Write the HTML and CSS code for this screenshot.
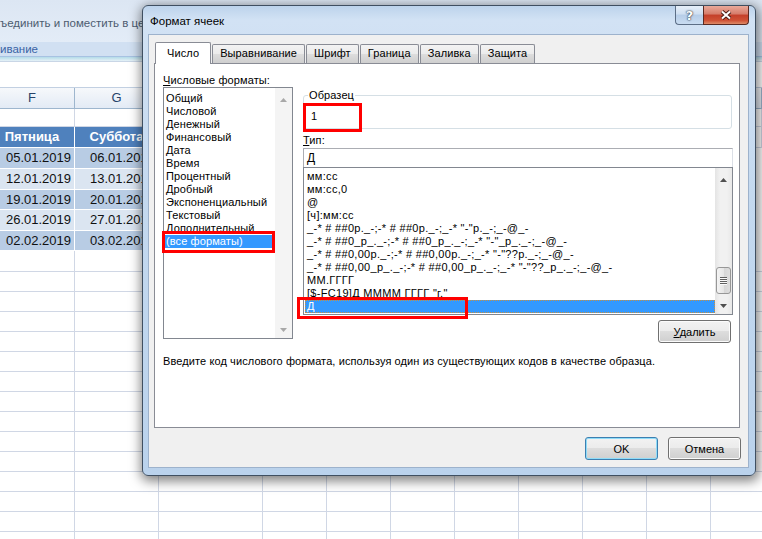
FILE: index.html
```html
<!DOCTYPE html>
<html lang="ru">
<head>
    <meta charset="UTF-8">
    <meta name="viewport" content="width=device-width, initial-scale=1.0">
    <title>Формат ячеек</title>
    <link rel="stylesheet" href="styles.css">
</head>
<body>
    <div class="excel">
        <div class="ribbon">ъединить и поместить в це</div>
        <div class="ribbon-group">ивание</div>
        <div class="ribbon-edge"></div>
        <div class="formula-bar"></div>
        <div class="sheet">
            <div class="row col-head">
                <div class="cell">F</div>
                <div class="cell">G</div>
                <div class="cell fill"></div>
            </div>
            <div class="row r-empty">
                <div class="cell"></div>
                <div class="cell"></div>
                <div class="cell fill"></div>
            </div>
            <div class="row r-head">
                <div class="cell">Пятница</div>
                <div class="cell">Суббота</div>
                <div class="cell fill"></div>
            </div>
            <div class="row r-data dark">
                <div class="cell">05.01.2019</div>
                <div class="cell">06.01.2019</div>
                <div class="cell fill"></div>
            </div>
            <div class="row r-data">
                <div class="cell">12.01.2019</div>
                <div class="cell">13.01.2019</div>
                <div class="cell fill"></div>
            </div>
            <div class="row r-data dark short">
                <div class="cell">19.01.2019</div>
                <div class="cell">20.01.2019</div>
                <div class="cell fill"></div>
            </div>
            <div class="row r-data">
                <div class="cell">26.01.2019</div>
                <div class="cell">27.01.2019</div>
                <div class="cell fill"></div>
            </div>
            <div class="row r-data dark short">
                <div class="cell">02.02.2019</div>
                <div class="cell">03.02.2019</div>
                <div class="cell fill"></div>
            </div>
            <div class="sheet-rest"></div>
        </div>
    </div>

    <div class="dialog">
        <div class="titlebar">
            <div class="title">Формат ячеек</div>
            <div class="caption">
                <div class="cap-btn cap-help">?</div>
                <div class="cap-btn cap-close">
                    <svg width="14" height="10" viewBox="0 0 14 10">
                        <path d="M3 1.5 L11 8.5 M11 1.5 L3 8.5" stroke="#4b1d15" stroke-width="4"/>
                        <path d="M3 1.5 L11 8.5 M11 1.5 L3 8.5" stroke="#fff" stroke-width="2"/>
                    </svg>
                </div>
            </div>
        </div>

        <div class="client">
            <div class="tabs">
                <div class="tab active">Число</div>
                <div class="tab">Выравнивание</div>
                <div class="tab">Шрифт</div>
                <div class="tab">Граница</div>
                <div class="tab">Заливка</div>
                <div class="tab">Защита</div>
            </div>

            <div class="panel">
                <div class="panel-main">
                    <div class="col-formats">
                        <div class="field-label"><u>Ч</u>исловые форматы:</div>
                        <div class="listbox formats">
                            <div class="list-items">
                                <div class="item">Общий</div>
                                <div class="item">Числовой</div>
                                <div class="item">Денежный</div>
                                <div class="item">Финансовый</div>
                                <div class="item">Дата</div>
                                <div class="item">Время</div>
                                <div class="item">Процентный</div>
                                <div class="item">Дробный</div>
                                <div class="item">Экспоненциальный</div>
                                <div class="item">Текстовый</div>
                                <div class="item">Дополнительный</div>
                                <div class="item selected">(все форматы)</div>
                            </div>
                            <div class="vscroll off">
                                <div class="arrow up">
                                    <svg width="7" height="4" viewBox="0 0 7 4"><path d="M0 4 L3.5 0 L7 4 Z"/></svg>
                                </div>
                                <div class="track"></div>
                                <div class="arrow down">
                                    <svg width="7" height="4" viewBox="0 0 7 4"><path d="M0 0 L7 0 L3.5 4 Z"/></svg>
                                </div>
                            </div>
                        </div>
                    </div>

                    <div class="col-type">
                        <fieldset class="sample">
                            <legend>Образец</legend>
                            <div class="sample-value">1</div>
                        </fieldset>
                        <div class="field-label"><u>Т</u>ип:</div>
                        <div class="type-input">Д</div>
                        <div class="listbox codes">
                            <div class="list-items">
                                <div class="item">мм:сс</div>
                                <div class="item">мм:сс,0</div>
                                <div class="item">@</div>
                                <div class="item">[ч]:мм:сс</div>
                                <div class="item">_-* # ##0р._-;-* # ##0р._-;_-* "-"р._-;_-@_-</div>
                                <div class="item">_-* # ##0_р_._-;-* # ##0_р_._-;_-* "-"_р_._-;_-@_-</div>
                                <div class="item">_-* # ##0,00р._-;-* # ##0,00р._-;_-* "-"??р._-;_-@_-</div>
                                <div class="item">_-* # ##0,00_р_._-;-* # ##0,00_р_._-;_-* "-"??_р_._-;_-@_-</div>
                                <div class="item">ММ.ГГГГ</div>
                                <div class="item">[$-FC19]Д ММММ ГГГГ "г."</div>
                                <div class="item selected focused">Д</div>
                            </div>
                            <div class="vscroll">
                                <div class="arrow up">
                                    <svg width="7" height="4" viewBox="0 0 7 4"><path d="M0 4 L3.5 0 L7 4 Z"/></svg>
                                </div>
                                <div class="track">
                                    <div class="thumb"><span></span><span></span><span></span><span></span></div>
                                </div>
                                <div class="arrow down">
                                    <svg width="7" height="4" viewBox="0 0 7 4"><path d="M0 0 L7 0 L3.5 4 Z"/></svg>
                                </div>
                            </div>
                        </div>
                        <div class="delete-row">
                            <button class="btn"><u>У</u>далить</button>
                        </div>
                    </div>
                </div>

                <p class="hint">Введите код числового формата, используя один из существующих кодов в качестве образца.</p>

                <div class="mark mark-all"></div>
                <div class="mark mark-sample"></div>
                <div class="mark mark-code"></div>
            </div>

            <div class="footer">
                <button class="btn default">OK</button>
                <button class="btn">Отмена</button>
            </div>
        </div>
    </div>
</body>
</html>
```

FILE: styles.css
```css
* {
    box-sizing: border-box;
}

body {
    margin: 0;
    width: 762px;
    height: 539px;
    overflow: hidden;
    position: relative;
    background: #fff;
    font-family: "Liberation Sans", Arial, sans-serif;
    font-size: 11px;
    color: #000;
}

/* excel behind the dialog */
.excel {
    height: 539px;
    display: flex;
    flex-direction: column;
}

.ribbon {
    height: 42px;
    padding-top: 16px;
    background: linear-gradient(#dce6f3, #e3ecf7);
    color: #4d5c70;
    font-size: 11.5px;
    line-height: 14px;
    white-space: nowrap;
}

.ribbon-group {
    height: 15px;
    background: #d1e0f2;
    color: #3a63a5;
    font-size: 11.5px;
    line-height: 14px;
    border-bottom: 1px solid #a7c2e2;
}

.ribbon-edge {
    height: 4px;
    background: linear-gradient(#b3dbe8, #e6f1f7);
}

.formula-bar {
    height: 26px;
    background: #fff;
    border-top: 1px solid #c9d6e6;
}

.sheet {
    flex: 1;
    display: flex;
    flex-direction: column;
    margin-left: -10px;
}

.row {
    display: grid;
    grid-template-columns: 85px 84px 1fr;
    font-size: 13px;
}

.cell {
    border-right: 1px solid #d0d7e5;
    border-bottom: 1px solid #d0d7e5;
    white-space: nowrap;
    overflow: hidden;
    padding: 0 3px;
}

.col-head {
    height: 22px;
    background: linear-gradient(#f6f8fb, #e2eaf5);
    border-top: 1px solid #c2d0e2;
    color: #27436a;
}

.col-head .cell {
    border-color: #9eb6ce;
    text-align: center;
    line-height: 20px;
}

.r-empty {
    height: 18px;
}

.r-head {
    height: 21px;
    background: #4f81bd;
    color: #fff;
    font-weight: bold;
}

.r-head .cell {
    border-color: #fff;
    text-align: center;
    line-height: 20px;
}

.r-head .fill,
.r-data .fill {
    background: #fff;
    border-color: #d0d7e5;
}

.r-data {
    height: 21px;
    background: #dbe5f1;
    color: #111;
}

.r-data.dark {
    background: #b8cce4;
}

.r-data.short {
    height: 20px;
}

.r-data .cell {
    border-color: #fff;
    text-align: right;
    line-height: 20px;
}

.sheet-rest {
    flex: 1;
    margin-left: 10px;
    background-image:
        linear-gradient(#d0d7e5, #d0d7e5),
        linear-gradient(#d0d7e5, #d0d7e5),
        linear-gradient(#d0d7e5, #d0d7e5),
        repeating-linear-gradient(90deg, transparent 0 63px, #d0d7e5 63px 64px),
        repeating-linear-gradient(180deg, transparent 0 19px, #d0d7e5 19px 20px);
    background-size: 1px 100%, 1px 100%, 1px 100%, 600px 100%, 100% 100%;
    background-position: 74px 0, 158px 0, 262px 0, 263px 0, 0 1px;
    background-repeat: no-repeat;
}

/* dialog window */
.dialog {
    position: absolute;
    left: 142px;
    top: 5px;
    width: 614px;
    height: 471px;
    border: 1px solid #3f4f61;
    border-radius: 6px;
    background: linear-gradient(#bcd3ec, #d2e2f4 14px, #c4d9ef 40%, #bad2ec);
    box-shadow: 1px 3px 12px 2px rgba(0, 0, 0, 0.5);
    padding: 0 6px 7px 5px;
    display: flex;
    flex-direction: column;
    letter-spacing: 0.1px;
}

.titlebar {
    height: 28px;
    display: flex;
    align-items: flex-start;
}

.title {
    margin: 8px 0 0 2px;
    font-size: 11.5px;
    line-height: 14px;
    letter-spacing: 0;
}

.caption {
    display: flex;
    margin: 0 0 0 auto;
    height: 19px;
}

.cap-btn {
    display: flex;
    align-items: center;
    justify-content: center;
    height: 19px;
}

.cap-help {
    width: 28px;
    border: 1px solid #5c6e86;
    border-top: none;
    border-right: none;
    border-radius: 0 0 0 4px;
    background: linear-gradient(#e6eff9, #cfdff1 45%, #b6cde8 50%, #c9dcf1);
    color: #fff;
    font: bold 13px "DejaVu Sans", sans-serif;
    text-shadow: 0 0 2px #1c2838, 0 0 1px #1c2838;
}

.cap-close {
    width: 46px;
    border: 1px solid #5a2a22;
    border-top: none;
    border-radius: 0 0 4px 0;
    background: linear-gradient(#e9a99a, #d67b69 45%, #c43f2a 50%, #cf5236 80%, #de8b68);
}

.client {
    flex: 1;
    background: #f0f0f0;
    border: 1px solid #9db2cc;
    padding: 7px 8px 0 5px;
    display: flex;
    flex-direction: column;
}

.tabs {
    display: flex;
    align-items: flex-end;
    margin: 0 0 -1px 1px;
    height: 22px;
    position: relative;
    z-index: 1;
}

.tab {
    height: 19px;
    padding: 0 7px;
    margin-right: 1px;
    border: 1px solid #898c95;
    border-bottom: none;
    border-radius: 2px 2px 0 0;
    background: linear-gradient(#f3f3f3, #ebebeb 50%, #dddddd 50%, #cfcfcf);
    line-height: 17px;
    margin-bottom: 1px;
}

.tab.active {
    height: 22px;
    padding: 0 11px;
    background: #fff;
    line-height: 20px;
    margin-bottom: 0;
}

.panel {
    flex: 1;
    position: relative;
    background: #fff;
    border: 1px solid #898c95;
    padding: 10px 6px 0 8px;
}

.panel-main {
    display: flex;
    align-items: flex-start;
}

.field-label {
    height: 13px;
    line-height: 13px;
}

.col-formats {
    width: 130px;
}

.col-type {
    flex: 1;
    margin-left: 10px;
}

.listbox {
    display: flex;
    background: #fff;
    border: 1px solid #828790;
}

.formats {
    height: 252px;
}

.list-items {
    flex: 1;
    overflow: hidden;
}

.item {
    height: 13px;
    line-height: 13px;
    padding-left: 2px;
    white-space: nowrap;
}

.formats .list-items {
    padding-top: 4px;
}

.item.selected {
    background: #3399ff;
    color: #fff;
}

.item.focused {
    outline: 1px dotted #c98f3e;
    outline-offset: -1px;
}

.vscroll {
    width: 17px;
    display: flex;
    flex-direction: column;
    background: linear-gradient(90deg, #e4e4e4, #f1f1f1 30%, #f1f1f1 70%, #e8e8e8);
}

.vscroll.off {
    background: #f4f4f4;
}

.arrow {
    height: 17px;
    display: flex;
    justify-content: center;
    fill: #505050;
}

.arrow.up {
    align-items: flex-start;
    padding-top: 10px;
}

.arrow.down {
    align-items: center;
}

.vscroll.off .arrow {
    fill: #a8a8a8;
}

.track {
    flex: 1;
    display: flex;
    flex-direction: column;
    justify-content: flex-end;
    align-items: center;
}

.thumb {
    width: 15px;
    height: 27px;
    margin-bottom: 3px;
    border: 1px solid #979797;
    border-radius: 3px;
    background: linear-gradient(90deg, #f4f4f4, #e6e6e6 50%, #d6d6d6 51%, #dedede);
    display: flex;
    flex-direction: column;
    justify-content: center;
    align-items: center;
    gap: 1px;
}

.thumb span {
    width: 7px;
    height: 1px;
    background: #606060;
    box-shadow: 0 1px 0 #fafafa;
}

.sample {
    margin: 15px 1px 0 0;
    padding: 8px 9px 5px 7px;
    border: 1px solid #d5dfe5;
    border-radius: 3px;
    min-inline-size: 0;
}

.sample legend {
    padding: 0 1px;
    margin-left: -3px;
    line-height: 13px;
}

.sample-value {
    height: 13px;
    line-height: 13px;
}

.sample + .field-label {
    margin-top: 5px;
}

.type-input {
    margin-top: 1px;
    height: 19px;
    border: 1px solid #abadb3;
    border-bottom: none;
    border-right-color: #dbdfe6;
    padding: 3px 0 0 3px;
    line-height: 13px;
    font-size: 12px;
}

.codes {
    height: 148px;
}

.codes .list-items {
    padding: 2px 0 0 1px;
    letter-spacing: 0.3px;
}

.delete-row {
    display: flex;
    justify-content: flex-end;
    margin: 5px 2px 0 0;
}

.btn {
    width: 73px;
    height: 23px;
    padding: 0;
    border: 1px solid #707070;
    border-radius: 3px;
    background: linear-gradient(#f2f2f2, #ebebeb 50%, #dddddd 50%, #cfcfcf);
    box-shadow: inset 0 0 0 1px #fbfbfb;
    font-family: "Liberation Sans", Arial, sans-serif;
    font-size: 11px;
    color: #000;
}

.btn.default {
    border-color: #3c7fb1;
    box-shadow: inset 0 0 0 1px #8fdcf8;
}

.hint {
    margin: 12px 0 0 0;
    line-height: 13px;
}

.mark {
    position: absolute;
    border: 3px solid #ff0000;
}

.mark-all {
    left: 7px;
    top: 167px;
    width: 113px;
    height: 22px;
}

.mark-sample {
    left: 148px;
    top: 39px;
    width: 59px;
    height: 29px;
}

.mark-code {
    left: 142px;
    top: 233px;
    width: 171px;
    height: 22px;
}

.footer {
    display: flex;
    justify-content: flex-end;
    gap: 10px;
    margin: 9px -1px 7px 0;
}
```
